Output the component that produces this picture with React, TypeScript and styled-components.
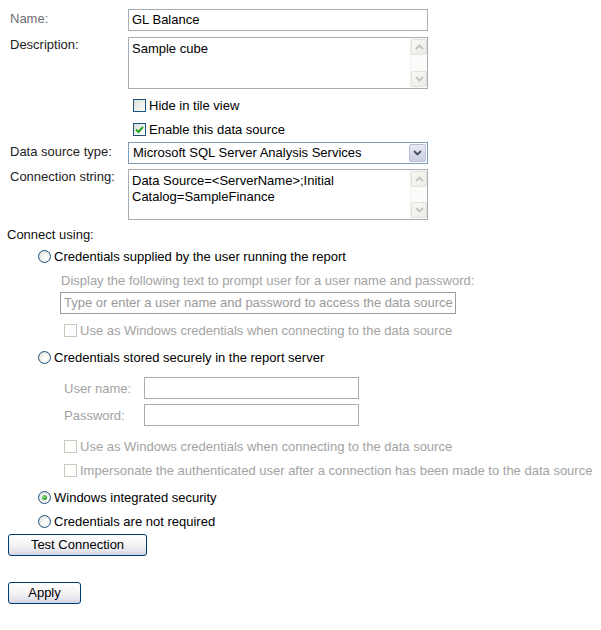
import React from 'react';
import styled, { createGlobalStyle } from 'styled-components';

const GlobalStyle = createGlobalStyle`
  html, body {
    margin: 0;
    padding: 0;
    background: #ffffff;
  }
  body {
    font-family: "Liberation Sans", Arial, sans-serif;
    font-size: 13px;
    color: #000000;
  }
`;

const Page = styled.div`
  width: 601px;
  height: 630px;
  padding-top: 9px;
  box-sizing: border-box;
  line-height: 15px;
`;

const FieldRow = styled.div<{ $top: number }>`
  display: flex;
  align-items: flex-start;
  margin-top: ${({ $top }) => $top}px;
`;

const FieldLabel = styled.div<{ $dim?: boolean; $pad?: number }>`
  width: 128px;
  padding-left: 10px;
  padding-top: ${({ $pad }) => $pad ?? 0}px;
  box-sizing: border-box;
  color: ${({ $dim }) => ($dim ? '#6f6f6f' : '#222222')};
`;

const TextInput = styled.div<{ $width: number; $disabled?: boolean }>`
  width: ${({ $width }) => $width}px;
  height: 22px;
  box-sizing: border-box;
  border: 1px solid ${({ $disabled }) => ($disabled ? '#9c9c9c' : '#a5acb2')};
  padding: 2px 3px;
  color: ${({ $disabled }) => ($disabled ? '#9a9a9a' : '#000000')};
  white-space: nowrap;
  overflow: hidden;
  background: #ffffff;
`;

const TextBox = styled.div<{ $height: number }>`
  display: flex;
  width: 300px;
  height: ${({ $height }) => $height}px;
  box-sizing: border-box;
  border: 1px solid #a5acb2;
  background: #ffffff;
`;

const TextBoxContent = styled.div`
  flex: 1;
  padding: 3px 3px;
  line-height: 16px;
`;

const ScrollBar = styled.div`
  width: 17px;
  display: flex;
  flex-direction: column;
  justify-content: space-between;
  background: #fbfbf9;
  border-left: 1px solid #f0f0ec;
  padding: 1px 0;
  box-sizing: border-box;
`;

const ScrollButton = styled.div`
  width: 16px;
  height: 16px;
  box-sizing: border-box;
  border: 1px solid #e2e1da;
  border-radius: 2px;
  background: linear-gradient(135deg, #f9f9f6 0%, #ecebe5 100%);
  display: flex;
  align-items: center;
  justify-content: center;
`;

const Select = styled.div`
  display: flex;
  width: 300px;
  height: 22px;
  box-sizing: border-box;
  border: 1px solid #7f9db9;
  background: #ffffff;
`;

const SelectText = styled.div`
  flex: 1;
  padding: 2px 4px;
  white-space: nowrap;
`;

const SelectButton = styled.div`
  width: 17px;
  margin: 1px;
  box-sizing: border-box;
  border: 1px solid #b8bfd6;
  border-radius: 2px;
  background: linear-gradient(180deg, #e8ebf5 0%, #c9cee2 100%);
  display: flex;
  align-items: center;
  justify-content: center;
`;

const OptionRow = styled.label<{ $top: number; $left: number; $disabled?: boolean }>`
  display: flex;
  align-items: center;
  gap: 3px;
  height: 16px;
  margin-top: ${({ $top }) => $top}px;
  padding-left: ${({ $left }) => $left}px;
  color: ${({ $disabled }) => ($disabled ? '#a3a3a3' : '#000000')};
`;

const CheckBox = styled.span<{ $disabled?: boolean }>`
  width: 13px;
  height: 13px;
  box-sizing: border-box;
  border: 1px solid ${({ $disabled }) => ($disabled ? '#cac8bb' : '#1c5180')};
  background: ${({ $disabled }) =>
    $disabled ? '#ffffff' : 'linear-gradient(135deg, #dcdcd7 0%, #ffffff 100%)'};
  display: flex;
  align-items: center;
  justify-content: center;
  flex-shrink: 0;
`;

const Radio = styled.span`
  width: 13px;
  height: 13px;
  box-sizing: border-box;
  border-radius: 50%;
  border: 1px solid #1c5180;
  background: radial-gradient(circle at 60% 60%, #ffffff 0%, #f2f2ee 45%, #d4d4cc 100%);
  display: flex;
  align-items: center;
  justify-content: center;
  flex-shrink: 0;
`;

const RadioDot = styled.span`
  width: 5px;
  height: 5px;
  border-radius: 50%;
  background: radial-gradient(circle at 35% 35%, #8fe08f 0%, #21a121 70%);
`;

const Heading = styled.div<{ $top: number }>`
  margin-top: ${({ $top }) => $top}px;
  padding-left: 7px;
  color: #111111;
`;

const Hint = styled.div`
  margin-top: 9px;
  padding-left: 61px;
  color: #a3a3a3;
`;

const IndentedInput = styled.div<{ $top: number }>`
  margin-top: ${({ $top }) => $top}px;
  padding-left: 60px;
`;

const CredRow = styled.div<{ $top: number }>`
  display: flex;
  align-items: center;
  margin-top: ${({ $top }) => $top}px;
  padding-left: 64px;
`;

const CredLabel = styled.div`
  width: 80px;
  color: #a3a3a3;
`;

const Button = styled.button<{ $width: number; $top: number }>`
  display: block;
  width: ${({ $width }) => $width}px;
  height: 22px;
  margin-top: ${({ $top }) => $top}px;
  margin-left: 8px;
  box-sizing: border-box;
  border: 1px solid #003c74;
  border-radius: 3px;
  background: linear-gradient(180deg, #ffffff 0%, #f5f5f7 45%, #e4e4ee 80%, #d2d2e2 100%);
  font-family: "Liberation Sans", Arial, sans-serif;
  font-size: 13px;
  color: #000000;
  padding: 0 0 1px;
  line-height: 15px;
`;

const Chevron = ({ up, color }: { up?: boolean; color: string }) => (
  <svg width="9" height="6" viewBox="0 0 9 6">
    <path
      d={up ? 'M1 5 L4.5 1.5 L8 5' : 'M1 1 L4.5 4.5 L8 1'}
      fill="none"
      stroke={color}
      strokeWidth="1.8"
    />
  </svg>
);

const Check = () => (
  <svg width="9" height="9" viewBox="0 0 9 9">
    <path d="M1 4.5 L3.5 7 L8 1.8" fill="none" stroke="#21a121" strokeWidth="2" />
  </svg>
);

const ScrollingBox = ({ height, children }: { height: number; children: React.ReactNode }) => (
  <TextBox $height={height}>
    <TextBoxContent>{children}</TextBoxContent>
    <ScrollBar>
      <ScrollButton>
        <Chevron up color="#c4c4bc" />
      </ScrollButton>
      <ScrollButton>
        <Chevron color="#c4c4bc" />
      </ScrollButton>
    </ScrollBar>
  </TextBox>
);

export default function App() {
  return (
    <>
      <GlobalStyle />
      <Page>
        <FieldRow $top={0}>
          <FieldLabel $dim $pad={2}>Name:</FieldLabel>
          <TextInput $width={300}>GL Balance</TextInput>
        </FieldRow>
        <FieldRow $top={6}>
          <FieldLabel>Description:</FieldLabel>
          <ScrollingBox height={52}>Sample cube</ScrollingBox>
        </FieldRow>

        <OptionRow $top={8} $left={133}>
          <CheckBox />
          Hide in tile view
        </OptionRow>
        <OptionRow $top={8} $left={133}>
          <CheckBox>
            <Check />
          </CheckBox>
          Enable this data source
        </OptionRow>

        <FieldRow $top={5}>
          <FieldLabel $pad={2}>Data source type:</FieldLabel>
          <Select>
            <SelectText>Microsoft SQL Server Analysis Services</SelectText>
            <SelectButton>
              <Chevron color="#4a4f60" />
            </SelectButton>
          </Select>
        </FieldRow>
        <FieldRow $top={5}>
          <FieldLabel>Connection string:</FieldLabel>
          <ScrollingBox height={51}>
            Data Source=&lt;ServerName&gt;;Initial
            <br />
            Catalog=SampleFinance
          </ScrollingBox>
        </FieldRow>

        <Heading $top={7}>Connect using:</Heading>

        <OptionRow $top={6} $left={38}>
          <Radio />
          Credentials supplied by the user running the report
        </OptionRow>
        <Hint>Display the following text to prompt user for a user name and password:</Hint>
        <IndentedInput $top={4}>
          <TextInput $width={396} $disabled>
            Type or enter a user name and password to access the data source
          </TextInput>
        </IndentedInput>
        <OptionRow $top={8} $left={64} $disabled>
          <CheckBox $disabled />
          Use as Windows credentials when connecting to the data source
        </OptionRow>

        <OptionRow $top={11} $left={38}>
          <Radio />
          Credentials stored securely in the report server
        </OptionRow>
        <CredRow $top={12}>
          <CredLabel>User name:</CredLabel>
          <TextInput $width={215} />
        </CredRow>
        <CredRow $top={5}>
          <CredLabel>Password:</CredLabel>
          <TextInput $width={215} />
        </CredRow>
        <OptionRow $top={12} $left={64} $disabled>
          <CheckBox $disabled />
          Use as Windows credentials when connecting to the data source
        </OptionRow>
        <OptionRow $top={8} $left={64} $disabled>
          <CheckBox $disabled />
          Impersonate the authenticated user after a connection has been made to the data source
        </OptionRow>

        <OptionRow $top={11} $left={38}>
          <Radio>
            <RadioDot />
          </Radio>
          Windows integrated security
        </OptionRow>
        <OptionRow $top={8} $left={38}>
          <Radio />
          Credentials are not required
        </OptionRow>

        <Button $width={139} $top={5}>Test Connection</Button>
        <Button $width={73} $top={26}>Apply</Button>
      </Page>
    </>
  );
}
